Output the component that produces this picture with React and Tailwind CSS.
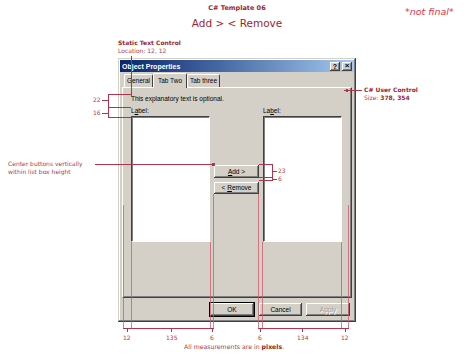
import React from "react";

const btn3d =
  "shadow-[inset_-1px_-1px_#404040,inset_1px_1px_#ffffff,inset_-2px_-2px_#808080]";

function WinButton({ children, className = "", disabled = false, isDefault = false }) {
  return (
    <div
      className={`flex items-center justify-center bg-[#d4d0c8] text-[6.5px] whitespace-nowrap ${btn3d} ${
        isDefault ? "outline outline-1 outline-black" : ""
      } ${disabled ? "text-[#9a9a9a] [text-shadow:1px_1px_#ffffff]" : "text-black"} ${className}`}
    >
      {children}
    </div>
  );
}

function ListBox() {
  return (
    <div className="w-[79px] h-[126px] bg-white border-t border-l border-t-[#404040] border-l-[#404040] border-r border-b border-r-white border-b-white shadow-[inset_1px_1px_#808080]" />
  );
}

function Tab({ children, selected = false, className = "" }) {
  return (
    <div
      className={`flex items-center justify-center whitespace-nowrap bg-[#d4d0c8] border-t border-l border-t-white border-l-white border-r border-r-[#404040] text-[6.5px] leading-none text-black rounded-t-[2px] ${
        selected ? "h-[15px] -mb-px z-10 px-[3px]" : "h-[13px] px-[2px]"
      } ${className}`}
    >
      {children}
    </div>
  );
}

function Dialog() {
  return (
    <div
      className="absolute left-[118px] top-[58px] w-[238px] h-[264px] bg-[#d4d0c8] p-[2px] flex flex-col shadow-[inset_-1px_-1px_#404040,inset_1px_1px_#d4d0c8,inset_-2px_-2px_#808080,inset_2px_2px_#ffffff]"
      style={{ fontFamily: '"Liberation Sans", Arial, sans-serif' }}
    >
      {/* title bar */}
      <div className="h-[12px] flex items-center justify-between bg-linear-to-r from-[#0a246a] to-[#a6caf0] pl-[2px] pr-[2px]">
        <span className="text-[7px] font-bold text-white leading-none">Object Properties</span>
        <div className="flex items-center gap-[2px]">
          <div className={`w-[10px] h-[9px] bg-[#d4d0c8] ${btn3d} flex items-center justify-center text-[7px] font-bold leading-none text-black`}>?</div>
          <div className={`w-[10px] h-[9px] bg-[#d4d0c8] ${btn3d} flex items-center justify-center text-[8px] font-bold leading-none text-black`}>×</div>
        </div>
      </div>

      {/* tabs */}
      <div className="h-[15px] flex items-end pl-[4px]">
        <Tab className="w-[29px]">General</Tab>
        <Tab selected className="w-[34px]">Tab Two</Tab>
        <Tab className="w-[33px]">Tab three</Tab>
      </div>

      {/* tab panel */}
      <div className="mx-[2px] h-[211px] border-t border-l border-t-white border-l-white border-r border-b border-r-[#404040] border-b-[#404040] shadow-[inset_-1px_-1px_#808080] pl-[8px] pt-[7px] flex flex-col">
        <div className="h-[8px] text-[6.5px] leading-[8px] text-black whitespace-nowrap">This explanatory text is optional.</div>
        <div className="mt-[4px] flex gap-[4px]">
          <div className="flex flex-col">
            <div className="h-[9px] text-[6.5px] leading-[8px] text-black">
              L<span className="underline">a</span>bel:
            </div>
            <ListBox />
          </div>
          <div className="flex flex-col pt-[9px]">
            <div className="h-[126px] flex flex-col justify-center gap-[4px] pt-[1px]">
              <WinButton className="w-[45px] h-[13px]">
                <span>
                  <span className="underline">A</span>dd &gt;
                </span>
              </WinButton>
              <WinButton className="w-[45px] h-[12px]">
                <span>
                  &lt; <span className="underline">R</span>emove
                </span>
              </WinButton>
            </div>
          </div>
          <div className="flex flex-col">
            <div className="h-[9px] text-[6.5px] leading-[8px] text-black">
              La<span className="underline">b</span>el:
            </div>
            <ListBox />
          </div>
        </div>
      </div>

      {/* bottom buttons */}
      <div className="mt-[5px] flex justify-end pr-[4px]">
        <WinButton isDefault className="w-[44px] h-[13px]">OK</WinButton>
        <WinButton className="w-[43px] h-[13px] ml-[5px]">Cancel</WinButton>
        <WinButton disabled className="w-[44px] h-[13px] ml-[4px]">Apply</WinButton>
      </div>
    </div>
  );
}

function Overlay() {
  const c = "#b3344a";
  const l = "#c85a6a";
  return (
    <svg
      className="absolute left-0 top-0 pointer-events-none"
      width="474"
      height="355"
      viewBox="0 0 474 355"
      shapeRendering="crispEdges"
    >
      <line x1="131.5" y1="56" x2="131.5" y2="97" stroke={c} strokeWidth="1" />
      <path d="M131 94.5 H108.5 V117.5 H131 M108.5 107.5 H131 M102 100.5 H108.5 M102 113.5 H108.5" fill="none" stroke={c} strokeWidth="1" />
      <line x1="345" y1="90.5" x2="362" y2="90.5" stroke={c} strokeWidth="1" />
      <path d="M344 90.5 L348 88.5 L348 92.5 Z" fill={c} stroke="none" />
      <line x1="95" y1="164.5" x2="213" y2="164.5" stroke={c} strokeWidth="1" />
      <rect x="212" y="163" width="3" height="3" fill={c} />
      <path d="M259 164.5 H272.5 V180.5 H259 M259 177.5 H272.5 M272.5 171.5 H277 M272.5 179 H277" fill="none" stroke={c} strokeWidth="1" />
      <g stroke={l} strokeWidth="1" opacity="0.75">
        <line x1="123.5" y1="205" x2="123.5" y2="328" />
        <line x1="131.5" y1="242" x2="131.5" y2="328" />
        <line x1="210.5" y1="242" x2="210.5" y2="328" />
        <line x1="213.5" y1="194" x2="213.5" y2="328" />
        <line x1="258.5" y1="194" x2="258.5" y2="328" />
        <line x1="262.5" y1="242" x2="262.5" y2="328" />
        <line x1="341.5" y1="242" x2="341.5" y2="328" />
        <line x1="348.5" y1="205" x2="348.5" y2="328" />
      </g>
      <g stroke={c} strokeWidth="1">
        <line x1="123" y1="328.5" x2="214" y2="328.5" />
        <line x1="258" y1="328.5" x2="349" y2="328.5" />
        <line x1="127.5" y1="328" x2="127.5" y2="332" />
        <line x1="171.5" y1="328" x2="171.5" y2="332" />
        <line x1="212.5" y1="328" x2="212.5" y2="332" />
        <line x1="260.5" y1="328" x2="260.5" y2="332" />
        <line x1="302.5" y1="328" x2="302.5" y2="332" />
        <line x1="345.5" y1="328" x2="345.5" y2="332" />
      </g>
    </svg>
  );
}

export default function App() {
  const red = "text-[#9c1f30]";
  return (
    <div
      className="relative w-[474px] h-[355px] bg-white overflow-hidden"
      style={{ fontFamily: '"DejaVu Sans", Verdana, sans-serif' }}
    >
      <div className="flex flex-col items-center pt-[4px]">
        <div className={`text-[6.5px] font-bold leading-[8px] ${red}`}>C# Template 06</div>
        <div className={`mt-[5px] text-[10.5px] leading-[12px] ${red}`}>Add &gt; &lt; Remove</div>
      </div>
      <div className="absolute left-[405px] top-[6px] text-[9.5px] italic text-[#e23247] leading-[12px]">*not final*</div>

      <div className={`absolute left-[118px] top-[39px] text-[6px] leading-[8px] ${red}`}>
        <div className="font-bold">Static Text Control</div>
        <div className="text-[#b04050]">Location: 12, 12</div>
      </div>

      <div className={`absolute left-[364px] top-[86px] text-[6px] leading-[8px] ${red}`}>
        <div className="font-bold">C# User Control</div>
        <div>
          <span className="text-[#b04050]">Size: </span>
          <span className="font-bold">378, 354</span>
        </div>
      </div>

      <div className="absolute left-[93px] top-[96px] text-[6px] leading-[8px] text-[#b04050]">22</div>
      <div className="absolute left-[93px] top-[109px] text-[6px] leading-[8px] text-[#b04050]">16</div>

      <div className="absolute left-[8px] top-[160px] text-[6px] leading-[8px] text-[#b03a4c]">
        <div>Center buttons vertically</div>
        <div>within list box height</div>
      </div>

      <Dialog />

      <div className="absolute left-[278px] top-[167px] text-[6px] leading-[8px] text-[#b04050]">23</div>
      <div className="absolute left-[278px] top-[175px] text-[6px] leading-[8px] text-[#b04050]">6</div>

      <Overlay />

      <div className="absolute top-[334px] left-0 w-full text-[6px] leading-[8px] text-[#b04050]">
        <span className="absolute left-[123px]">12</span>
        <span className="absolute left-[166px]">135</span>
        <span className="absolute left-[210px]">6</span>
        <span className="absolute left-[258px]">6</span>
        <span className="absolute left-[297px]">134</span>
        <span className="absolute left-[341px]">12</span>
      </div>

      <div className="absolute top-[343px] left-[184px] text-[6.2px] leading-[8px] text-[#b03a4c]">
        All measurements are in <span className="font-bold text-[#8c1a2a]">pixels</span>.
      </div>
    </div>
  );
}
